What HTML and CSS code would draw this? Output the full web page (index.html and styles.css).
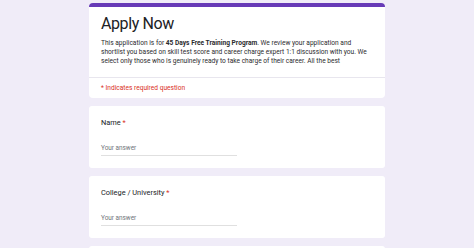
FILE: index.html
```html
<!DOCTYPE html>
<html>
<head>
<meta charset="utf-8">
<link rel="stylesheet" href="styles.css">
</head>
<body>
<main class="form">
  <section class="card header-card">
    <div class="header-main">
      <h1 class="title">Apply Now</h1>
      <p class="desc">This application is for <b>45 Days Free Training Program</b>. We review your application and shortlist you based on skill test score and career charge expert 1:1 discussion with you. We select only those who is genuinely ready to take charge of their career. All the best</p>
    </div>
    <div class="required-note">* Indicates required question</div>
  </section>
  <section class="card question">
    <div class="q-label">Name <span class="star">*</span></div>
    <div class="answer">Your answer</div>
  </section>
  <section class="card question">
    <div class="q-label">College / University <span class="star">*</span></div>
    <div class="answer">Your answer</div>
  </section>
  <section class="card question"></section>
</main>
</body>
</html>
```
FILE: styles.css
```css
html, body {
  margin: 0;
  padding: 0;
  background: #f0ecf8;
  font-family: Roboto, "Liberation Sans", sans-serif;
  color: #202124;
  overflow: hidden;
}
.form {
  width: 296px;
  margin: 0 auto;
  padding-top: 3px;
  display: flex;
  flex-direction: column;
  gap: 8px;
}
.card {
  background: #fff;
  border-radius: 3px;
}
.header-card {
  border-top: 4px solid #673ab7;
  border-radius: 4px;
}
.header-main {
  padding: 6px 12px 11px;
  border-bottom: 1px solid #e8e6ee;
}
.title {
  margin: 0;
  font-family: Roboto, sans-serif;
  font-weight: 400;
  font-size: 16px;
  letter-spacing: -0.4px;
  line-height: 21px;
  color: #202124;
}
.desc {
  margin: 5px 0 0;
  font-size: 6.6px;
  line-height: 9px;
  color: #2b2b2e;
}
.desc b {
  font-weight: 700;
}
.required-note {
  padding: 6px 12px 6px;
  font-size: 6.6px;
  line-height: 8px;
  color: #d93025;
}
.question {
  height: 62px;
  padding: 12px 12px 0;
  box-sizing: border-box;
}
.q-label {
  font-size: 7.4px;
  line-height: 10px;
  color: #202124;
}
.star {
  color: #d93025;
}
.answer {
  margin-top: 16px;
  width: 136px;
  font-size: 6.4px;
  line-height: 9px;
  color: #70757a;
  padding-bottom: 2px;
  border-bottom: 1px solid #e0e0e0;
}
```
